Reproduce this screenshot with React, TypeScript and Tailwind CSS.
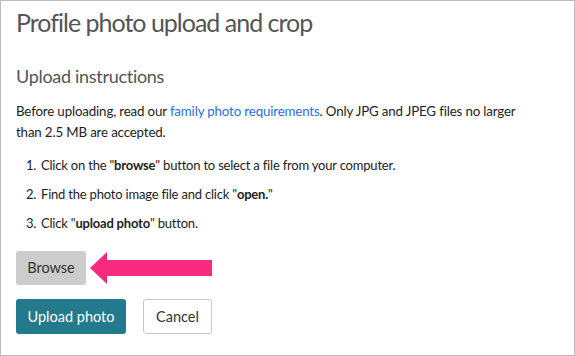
import React from "react";

export default function App() {
  return (
    <div className="w-[575px] h-[356px] border border-[#bdbdbd] bg-white pl-[15px] pr-[8px] pt-[4px] overflow-hidden" style={{ fontFamily: "Lato, 'Liberation Sans', sans-serif" }}>
      <h1 className="text-[25px] leading-[34px] text-[#555555] font-normal tracking-[-1px]">Profile photo upload and crop</h1>
      <h2 className="mt-[24px] text-[18px] leading-[26px] text-[#555555] font-normal tracking-[-0.3px]">Upload instructions</h2>
      <p className="mt-[12px] text-[13.3px] leading-[21px] text-[#222222] tracking-[-0.15px] whitespace-nowrap">
        Before uploading, read our <a className="text-[#2a6fdb]">family photo requirements</a>. Only JPG and JPEG files no larger
        <br />
        than 2.5 MB are accepted.
      </p>
      <ol className="mt-[12px] text-[13px] leading-[21px] text-[#222222] tracking-[-0.2px] flex flex-col gap-[8px] pl-[10px]">
        <li className="flex"><span className="w-[15px]">1.</span><span>Click on the "<b>browse</b>" button to select a file from your computer.</span></li>
        <li className="flex"><span className="w-[15px]">2.</span><span>Find the photo image file and click "<b>open.</b>"</span></li>
        <li className="flex"><span className="w-[15px]">3.</span><span>Click "<b>upload photo</b>" button.</span></li>
      </ol>
      <div className="mt-[17px] flex items-center gap-[4px]">
        <button className="w-[70px] h-[34px] rounded-[3px] bg-[#cccccc] text-[#333333] text-[14.5px]">Browse</button>
        <svg width="123" height="32" viewBox="0 0 123 32">
          <polygon points="0,16 17,0 17,8 122,8 122,24 17,24 17,32" fill="#f72a80" />
        </svg>
      </div>
      <div className="mt-[14px] flex gap-[17px]">
        <button className="w-[110px] h-[35px] rounded-[3px] bg-[#237a8c] text-white text-[14.5px]">Upload photo</button>
        <button className="w-[69px] h-[35px] rounded-[3px] bg-white border border-[#c8c8c8] text-[#333333] text-[14.5px]">Cancel</button>
      </div>
    </div>
  );
}
